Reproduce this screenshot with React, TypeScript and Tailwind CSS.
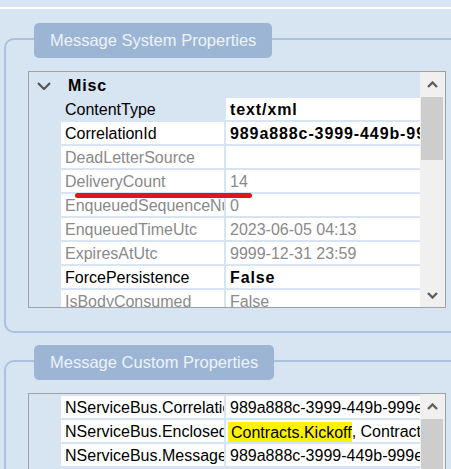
import type { ReactNode } from "react";

type Row = {
  name: string;
  value?: ReactNode;
  readOnly?: boolean;
  bold?: boolean;
  selected?: boolean;
};

const systemRows: Row[] = [
  { name: "ContentType", value: "text/xml", bold: true, selected: true },
  { name: "CorrelationId", value: "989a888c-3999-449b-999e-1f0c2a", bold: true },
  { name: "DeadLetterSource", value: "", readOnly: true },
  { name: "DeliveryCount", value: "14", readOnly: true },
  { name: "EnqueuedSequenceNumber", value: "0", readOnly: true },
  { name: "EnqueuedTimeUtc", value: "2023-06-05 04:13", readOnly: true },
  { name: "ExpiresAtUtc", value: "9999-12-31 23:59", readOnly: true },
  { name: "ForcePersistence", value: "False", bold: true },
  { name: "IsBodyConsumed", value: "False", readOnly: true },
];

const customRows: Row[] = [
  { name: "NServiceBus.CorrelationId", value: "989a888c-3999-449b-999e-1f0c2a" },
  {
    name: "NServiceBus.EnclosedMessageTypes",
    value: (
      <>
        <span className="bg-[#fff200] h-full flex items-center pl-[3px] -ml-[2px] pt-[2px]">Contracts.Kickoff</span>
        <span>, Contracts, Version=1.0.0.0</span>
      </>
    ),
  },
  { name: "NServiceBus.MessageId", value: "989a888c-3999-449b-999e-1f0c2a" },
];

function Chevron({ up }: { up?: boolean }) {
  return (
    <svg width="11" height="7" viewBox="0 0 11 7">
      <path
        d={up ? "M1 6 L5.5 1.5 L10 6" : "M1 1 L5.5 5.5 L10 1"}
        stroke="#5f5f5f"
        strokeWidth="2.4"
        fill="none"
      />
    </svg>
  );
}

function ScrollBar() {
  return (
    <div className="w-[25px] shrink-0 bg-[#f0f0f0] flex flex-col">
      <div className="h-[25px] flex items-center justify-center pr-[1px]">
        <Chevron up />
      </div>
      <div className="ml-[1px] mr-[2px] h-[63px] bg-[#cdcdcd]" />
      <div className="flex-1" />
      <div className="h-[24px] flex items-center justify-center pr-[1px]">
        <Chevron />
      </div>
    </div>
  );
}

function GridRow({ row }: { row: Row }) {
  const tone = row.readOnly ? "text-[#8a8a8a]" : "text-black";
  return (
    <div className="flex h-[24px] shrink-0 pb-[2px] pl-[32px] gap-[2px]">
      <div
        className={`w-[163px] shrink-0 flex items-center pl-[4px] pt-[2px] overflow-hidden whitespace-nowrap ${
          row.selected ? "bg-[#d7e4f2]" : "bg-white"
        } ${tone}`}
      >
        {row.name}
      </div>
      <div
        className={`flex-1 min-w-0 bg-white flex items-center pl-[4px] pt-[2px] overflow-hidden whitespace-nowrap ${tone} ${
          row.bold ? "font-bold tracking-[0.9px]" : ""
        }`}
      >
        {row.value}
      </div>
    </div>
  );
}

function GroupBox({
  title,
  className,
  children,
}: {
  title: string;
  className?: string;
  children: ReactNode;
}) {
  return (
    <div
      className={`relative ml-[4px] w-[470px] border-2 border-r-0 border-[#a9c1de] rounded-l-[10px] pl-[22px] pt-[31px] ${
        className ?? ""
      }`}
    >
      <div className="absolute left-[28px] top-[-17px] h-[35px] px-[16px] rounded-[5px] bg-[#9cb5d4] flex items-center text-[16.5px] text-[#eef3fa] whitespace-nowrap">
        {title}
      </div>
      {children}
    </div>
  );
}

export default function App() {
  return (
    <div className="relative w-[451px] h-[469px] overflow-hidden bg-[#d7e4f2] font-['Liberation_Sans',Arial,sans-serif] text-[16px] leading-none">
      <div className="h-[7px]" />
      <div className="h-[2px] bg-white" />

      <GroupBox title="Message System Properties" className="mt-[29px] h-[295px]">
        <div className="w-[418px] h-[237px] border border-[#a0a0a0] flex">
          <div className="flex-1 min-w-0 flex flex-col overflow-hidden">
            <div className="h-[26px] shrink-0 flex items-center pt-[1px]">
              <div className="w-[39px] pl-[8px] flex items-center">
                <svg width="14" height="8" viewBox="0 0 14 8">
                  <path d="M1 1 L7 7 L13 1" stroke="#555" strokeWidth="2.2" fill="none" />
                </svg>
              </div>
              <span className="font-bold tracking-[0.9px] text-black pt-[1px]">Misc</span>
            </div>
            {systemRows.map((r) => (
              <GridRow key={r.name} row={r} />
            ))}
          </div>
          <ScrollBar />
        </div>
      </GroupBox>

      <GroupBox title="Message Custom Properties" className="mt-[27px] h-[200px]">
        <div className="w-[418px] h-[140px] border border-[#a0a0a0] flex">
          <div className="flex-1 min-w-0 flex flex-col overflow-hidden pt-[2px]">
            {customRows.map((r) => (
              <GridRow key={r.name} row={r} />
            ))}
          </div>
          <ScrollBar />
        </div>
      </GroupBox>

      <div className="absolute left-[75px] top-[193px] w-[177px] h-[5px] rounded-full bg-[#e3141b]" />
    </div>
  );
}
